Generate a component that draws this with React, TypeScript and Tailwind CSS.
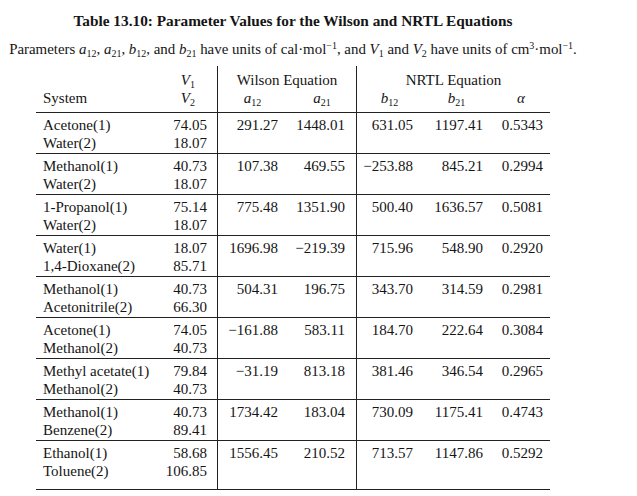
import React from 'react';

// Wilson / NRTL parameter table
const rows = [
  ['Acetone(1)', 'Water(2)', '74.05', '18.07', '291.27', '1448.01', '631.05', '1197.41', '0.5343'],
  ['Methanol(1)', 'Water(2)', '40.73', '18.07', '107.38', '469.55', '−253.88', '845.21', '0.2994'],
  ['1-Propanol(1)', 'Water(2)', '75.14', '18.07', '775.48', '1351.90', '500.40', '1636.57', '0.5081'],
  ['Water(1)', '1,4-Dioxane(2)', '18.07', '85.71', '1696.98', '−219.39', '715.96', '548.90', '0.2920'],
  ['Methanol(1)', 'Acetonitrile(2)', '40.73', '66.30', '504.31', '196.75', '343.70', '314.59', '0.2981'],
  ['Acetone(1)', 'Methanol(2)', '74.05', '40.73', '−161.88', '583.11', '184.70', '222.64', '0.3084'],
  ['Methyl acetate(1)', 'Methanol(2)', '79.84', '40.73', '−31.19', '813.18', '381.46', '346.54', '0.2965'],
  ['Methanol(1)', 'Benzene(2)', '40.73', '89.41', '1734.42', '183.04', '730.09', '1175.41', '0.4743'],
  ['Ethanol(1)', 'Toluene(2)', '58.68', '106.85', '1556.45', '210.52', '713.57', '1147.86', '0.5292'],
];

const cols = 'grid grid-cols-[129px_52px_69px_70px_65px_69px_60px]';

function Sym({ v, sub }: { v: string; sub: string }) {
  return (
    <span className="whitespace-nowrap">
      <i>{v}</i>
      <sub className="text-[10px]">{sub}</sub>
    </span>
  );
}

export default function App() {
  return (
    <div
      className="min-h-screen bg-white text-[#151515]"
      style={{ fontFamily: '"Liberation Serif", "Times New Roman", serif' }}
    >
      <div className="w-[586px] flex flex-col items-center pt-[11px]">
        <h1 className="text-[15.3px] leading-[20px] font-bold whitespace-nowrap">
          Table 13.10: Parameter Values for the Wilson and NRTL Equations
        </h1>
        <p className="mt-[8px] text-[14.9px] leading-[20px] whitespace-nowrap">
          Parameters <Sym v="a" sub="12" />, <Sym v="a" sub="21" />, <Sym v="b" sub="12" />, and{' '}
          <Sym v="b" sub="21" /> have units of cal·mol<sup className="text-[10px]">−1</sup>, and{' '}
          <Sym v="V" sub="1" /> and <Sym v="V" sub="2" /> have units of cm
          <sup className="text-[10px]">3</sup>·mol<sup className="text-[10px]">−1</sup>.
        </p>

        <div className="mt-[7px] w-[514px] text-[15px] leading-[17.5px]">
          {/* header */}
          <div className={`${cols} leading-[18px]`}>
            <div className="pt-[5px] pl-[7px] pb-[5px] flex flex-col">
              <span>&nbsp;</span>
              <span>System</span>
            </div>
            <div className="pt-[5px] pb-[5px] pr-[22px] flex flex-col items-end">
              <Sym v="V" sub="1" />
              <Sym v="V" sub="2" />
            </div>
            <div className="col-span-2 pt-[5px] pb-[5px] border-l border-[#222] flex flex-col">
              <div className="text-center">Wilson Equation</div>
              <div className="grid grid-cols-[69px_70px]">
                <div className="text-center"><Sym v="a" sub="12" /></div>
                <div className="text-center"><Sym v="a" sub="21" /></div>
              </div>
            </div>
            <div className="col-span-3 pt-[5px] pb-[5px] border-l border-[#222] flex flex-col">
              <div className="text-center">NRTL Equation</div>
              <div className="grid grid-cols-[65px_69px_60px]">
                <div className="text-center"><Sym v="b" sub="12" /></div>
                <div className="text-center"><Sym v="b" sub="21" /></div>
                <div className="text-center"><i>α</i></div>
              </div>
            </div>
          </div>

          {/* body */}
          {rows.map((r, i) => {
            const last = i === rows.length - 1;
            const pad = last ? 'pt-[4px] pb-[9px]' : 'pt-[4px] pb-[1px]';
            return (
              <div
                key={i}
                className={`${cols} border-t border-[#222] ${last ? 'border-b' : ''}`}
              >
                <div className={`${pad} pl-[7px] whitespace-nowrap`}>
                  <div>{r[0]}</div>
                  <div>{r[1]}</div>
                </div>
                <div className={`${pad} pr-[10px] text-right`}>
                  <div>{r[2]}</div>
                  <div>{r[3]}</div>
                </div>
                <div className={`${pad} pr-[8px] text-right border-l border-[#222]`}>{r[4]}</div>
                <div className={`${pad} pr-[11px] text-right`}>{r[5]}</div>
                <div className={`${pad} pr-[8px] text-right border-l border-[#222]`}>{r[6]}</div>
                <div className={`${pad} pr-[7px] text-right`}>{r[7]}</div>
                <div className={`${pad} pr-[7px] text-right`}>{r[8]}</div>
              </div>
            );
          })}
        </div>
      </div>
    </div>
  );
}
